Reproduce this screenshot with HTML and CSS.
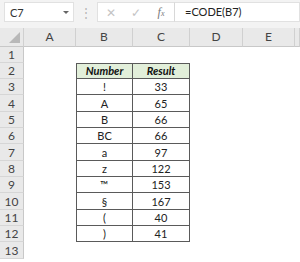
FILE: index.html
```html
<!DOCTYPE html>
<html lang="en">
<head>
  <meta charset="UTF-8">
  <title>CODE function</title>
  <link rel="stylesheet" href="styles.css">
</head>
<body>
  <div class="toolbar">
    <div class="name-box">
      <span>C7</span>
      <span class="caret"></span>
    </div>
    <div class="grip">⋮</div>
    <div class="actions">
      <span class="icon">✕</span>
      <span class="icon">✓</span>
      <span class="fx"><i>f</i><small>x</small></span>
    </div>
    <div class="formula">=CODE(B7)</div>
  </div>

  <div class="sheet" id="sheet">
    <div class="corner"></div>
    <div class="col-head">A</div>
    <div class="col-head">B</div>
    <div class="col-head">C</div>
    <div class="col-head">D</div>
    <div class="col-head">E</div>
    <div class="col-head"></div>
  </div>

  <script>
    const rows = [
      ["!", 33], ["A", 65], ["B", 66], ["BC", 66], ["a", 97], ["z", 122],
      ["™", 153], ["§", 167], ["(", 40], [")", 41]
    ];

    const sheet = document.getElementById('sheet');

    function cell(cls, text) {
      const el = document.createElement('div');
      el.className = cls;
      el.textContent = text || '';
      sheet.appendChild(el);
    }

    for (let r = 1; r <= 13; r++) {
      cell('row-head', r);
      cell('cell');
      if (r === 2) {
        cell('cell t first top head', 'Number');
        cell('cell t top head', 'Result');
      } else if (r >= 3 && r <= 12) {
        const [ch, code] = rows[r - 3];
        cell('cell t first', ch);
        cell('cell t', code);
      } else {
        cell('cell');
        cell('cell');
      }
      cell('cell');
      cell('cell');
      cell('cell');
    }
  </script>
</body>
</html>
```

FILE: styles.css
```css
* {
  box-sizing: border-box;
}
body {
  margin: 0;
  width: 300px;
  height: 262px;
  overflow: hidden;
  background: #fff;
  font-family: Lato, "Liberation Sans", sans-serif;
  font-size: 11px;
  color: #222;
}
.toolbar {
  display: flex;
  align-items: center;
  height: 28px;
  padding: 0 0 4px 4px;
  background: #f3f3f3;
}
.name-box {
  display: flex;
  align-items: center;
  justify-content: space-between;
  width: 70px;
  height: 20px;
  padding: 0 4px 0 5px;
  background: #fff;
  border: 1px solid #e1e1e1;
  color: #333;
}
.caret {
  width: 0;
  height: 0;
  border-left: 3px solid transparent;
  border-right: 3px solid transparent;
  border-top: 3px solid #666;
}
.grip {
  width: 23px;
  text-align: center;
  color: #b5b5b5;
  font-size: 12px;
}
.actions {
  display: flex;
  align-items: center;
  height: 20px;
  background: #fff;
  border: 1px solid #e1e1e1;
  border-right: none;
}
.icon {
  width: 25px;
  text-align: center;
  color: #c4c4c4;
  font-size: 12px;
}
.fx {
  width: 26px;
  text-align: center;
  color: #7a7a7a;
  font-family: "Liberation Serif", serif;
  font-size: 12px;
}
.fx small {
  font-size: 8px;
  font-style: italic;
}
.formula {
  flex: 1;
  height: 20px;
  line-height: 18px;
  padding-left: 10px;
  background: #fff;
  border: 1px solid #e1e1e1;
  border-left: 1px solid #d8d8d8;
  color: #222;
}
.sheet {
  display: grid;
  grid-template-columns: 24px 52px 57px 57px 53px 52px 5px;
  grid-template-rows: 18.5px;
  grid-auto-rows: 16.33px;
}
.corner {
  position: relative;
  background: #e9e9e9;
  border-right: 1px solid #d0d0d0;
  border-bottom: 1px solid #c8c8c8;
}
.corner::after {
  content: "";
  position: absolute;
  right: 3px;
  bottom: 3px;
  border-left: 11px solid transparent;
  border-bottom: 11px solid #b8b8b8;
}
.col-head {
  display: flex;
  align-items: center;
  justify-content: center;
  background: #e9e9e9;
  border-right: 1px solid #d0d0d0;
  border-bottom: 1px solid #c8c8c8;
  color: #444;
  font-size: 12px;
}
.row-head {
  display: flex;
  align-items: center;
  justify-content: center;
  background: #e9e9e9;
  border-right: 1px solid #c8c8c8;
  border-bottom: 1px solid #d6d6d6;
  color: #444;
  font-size: 12px;
}
.cell {
  display: flex;
  align-items: center;
  justify-content: center;
}
.t {
  border-right: 1px solid #5a5a5a;
  border-bottom: 1px solid #5a5a5a;
}
.t.first {
  border-left: 1px solid #5a5a5a;
}
.t.top {
  border-top: 1px solid #5a5a5a;
}
.t.head {
  background: #e2efda;
  font-weight: bold;
  font-style: italic;
  color: #111;
}
```
